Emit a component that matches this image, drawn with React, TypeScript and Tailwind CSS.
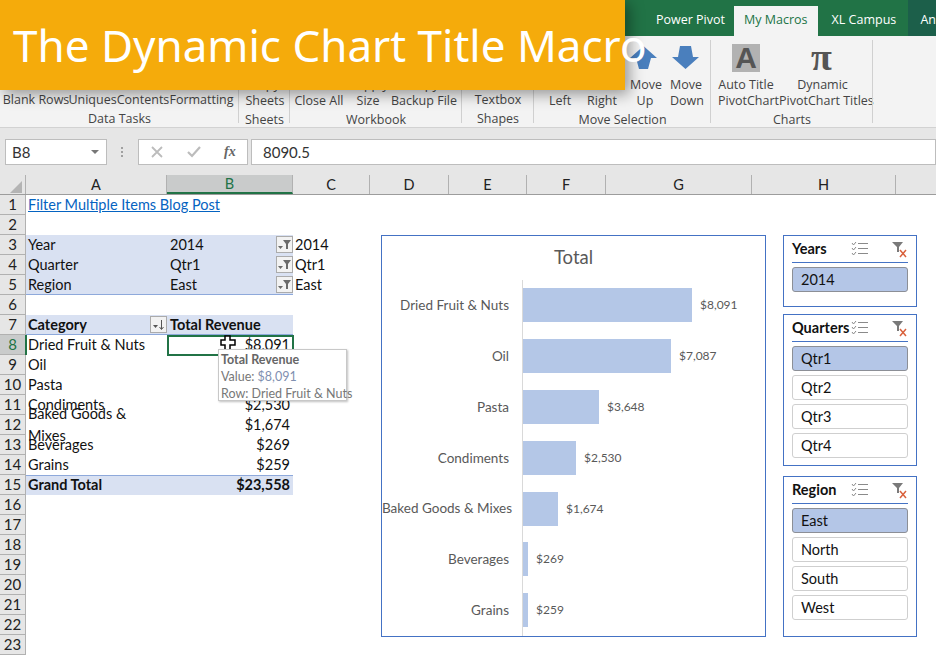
import React from "react";

const CELL_FONT = "font-['Lato','Liberation_Sans',sans-serif]";
const UI_FONT = "font-['Open_Sans','Noto_Sans',sans-serif]";

const columns = [
  { name: "A", width: "w-[141px]" },
  { name: "B", width: "w-[126px]", active: true },
  { name: "C", width: "w-[77px]" },
  { name: "D", width: "w-[79px]" },
  { name: "E", width: "w-[78px]" },
  { name: "F", width: "w-[79px]" },
  { name: "G", width: "w-[146px]" },
  { name: "H", width: "w-[144px]" },
];

const ribbonGroups = [
  {
    label: "Data Tasks",
    width: "w-[239px]",
    items: [
      { bottom: "Blank Rows", width: "w-[60px]" },
      { bottom: "Uniques", width: "w-[43px]" },
      { bottom: "Contents", width: "w-[48px]" },
      { bottom: "Formatting", width: "w-[59px]" },
    ],
    gap: "gap-[5px] pl-[6px]",
  },
  {
    label: "Sheets",
    width: "w-[51px]",
    items: [{ top: "Copy", bottom: "Sheets", width: "w-[36px]" }],
    gap: "pl-[8px]",
  },
  {
    label: "Workbook",
    width: "w-[172px]",
    items: [
      { bottom: "Close All", width: "w-[48px]" },
      { top: "Apply", bottom: "Size", width: "w-[24px]" },
      { top: "Copy", bottom: "Backup File", width: "w-[62px]" },
    ],
    gap: "gap-[13px] pl-[5px]",
  },
  {
    label: "Shapes",
    width: "w-[72px]",
    items: [{ bottom: "Textbox", width: "w-[44px]" }],
    gap: "pl-[14px]",
  },
];

type Row = {
  num: number;
  a?: string;
  b?: string;
  c?: string;
  kind?: "filter" | "head" | "total" | "body" | "link";
};

const rows: Row[] = [
  { num: 1, a: "Filter Multiple Items Blog Post", kind: "link" },
  { num: 2 },
  { num: 3, a: "Year", b: "2014", c: "2014", kind: "filter" },
  { num: 4, a: "Quarter", b: "Qtr1", c: "Qtr1", kind: "filter" },
  { num: 5, a: "Region", b: "East", c: "East", kind: "filter" },
  { num: 6 },
  { num: 7, a: "Category", b: "Total Revenue", kind: "head" },
  { num: 8, a: "Dried Fruit & Nuts", b: "$8,091", kind: "body" },
  { num: 9, a: "Oil", b: "$7,087", kind: "body" },
  { num: 10, a: "Pasta", b: "$3,648", kind: "body" },
  { num: 11, a: "Condiments", b: "$2,530", kind: "body" },
  { num: 12, a: "Baked Goods & Mixes", b: "$1,674", kind: "body" },
  { num: 13, a: "Beverages", b: "$269", kind: "body" },
  { num: 14, a: "Grains", b: "$259", kind: "body" },
  { num: 15, a: "Grand Total", b: "$23,558", kind: "total" },
  { num: 16 },
  { num: 17 },
  { num: 18 },
  { num: 19 },
  { num: 20 },
  { num: 21 },
  { num: 22 },
  { num: 23 },
];

const bars = [
  { label: "Dried Fruit & Nuts", value: "$8,091", width: 169 },
  { label: "Oil", value: "$7,087", width: 148 },
  { label: "Pasta", value: "$3,648", width: 76 },
  { label: "Condiments", value: "$2,530", width: 53 },
  { label: "Baked Goods & Mixes", value: "$1,674", width: 35 },
  { label: "Beverages", value: "$269", width: 5 },
  { label: "Grains", value: "$259", width: 5 },
];

function FunnelButton() {
  return (
    <span className="absolute right-0 top-[1px] flex h-[17px] w-[17px] items-center justify-center border border-[#ababab] bg-[#f2f2f2]">
      <svg width="15" height="13" viewBox="0 0 15 13">
        <path d="M6 2h8L11 6v5H9V6z" fill="#6a6a6a" />
        <path d="M1 8h5L3.500 11z" fill="#6a6a6a" />
      </svg>
    </span>
  );
}

function SortButton() {
  return (
    <span className="absolute right-0 top-[1px] flex h-[17px] w-[17px] items-center justify-center border border-[#ababab] bg-[#f2f2f2]">
      <svg width="13" height="12" viewBox="0 0 13 12">
        <path d="M1 6h5L3.500 9z" fill="#555" />
        <path d="M9.500 1v9M7.500 8l2 2.500 2-2.500" fill="none" stroke="#555" />
      </svg>
    </span>
  );
}

function SheetRow({ row }: { row: Row }) {
  const band =
    row.kind === "filter" || row.kind === "head" || row.kind === "total" ? "bg-[#d9e1f2]" : "";
  const strong = row.kind === "head" || row.kind === "total" ? "font-bold" : "";
  const rule =
    row.num === 5 || row.num === 7
      ? "shadow-[inset_0_-1px_0_#8ea9db]"
      : row.num === 15
        ? "shadow-[inset_0_1px_0_#8ea9db]"
        : "";
  return (
    <div className="flex h-5">
      <div
        className={`flex w-[26px] shrink-0 items-center justify-center border-r border-b border-[#b1b1b1] text-[15px] ${
          row.num === 8 ? "bg-[#c9cbcb] text-[#217346]" : "bg-[#e6e6e6] text-[#222]"
        }`}
      >
        {row.num}
      </div>
      <div className={`relative flex w-[267px] shrink-0 items-center text-[14.5px] text-[#111] ${band} ${rule} ${strong}`}>
        <div className="relative flex h-5 w-[141px] items-center pl-[2px]">
          {row.kind === "link" ? (
            <span className="whitespace-nowrap text-[#0563c1] underline">{row.a}</span>
          ) : (
            row.a
          )}
          {row.kind === "head" && <SortButton />}
        </div>
        <div
          className={`relative flex h-5 w-[126px] items-center px-[3px] ${
            row.kind === "body" || row.kind === "total" ? "justify-end" : ""
          }`}
        >
          {row.b}
          {row.kind === "filter" && <FunnelButton />}
        </div>
      </div>
      {row.c && <div className="flex items-center pl-[2px] text-[14.500px] text-[#111]">{row.c}</div>}
    </div>
  );
}

function ListIcon() {
  return (
    <svg width="18" height="16" viewBox="0 0 18 16" fill="none" stroke="#8a8a8a" strokeWidth="1">
      <path d="M1 2l1.500 2L5 1M1 7l1.500 2L5 6M1 12l1.500 2L5 11" />
      <path d="M7 2.500h10M7 7.500h10M7 12.500h10" />
    </svg>
  );
}

function ClearFilterIcon() {
  return (
    <svg width="18" height="17" viewBox="0 0 18 17">
      <path d="M1 1h11L8 6v5H6V6z" fill="#7a7a7a" />
      <path d="M9 9l6 7M15 9l-6 7" stroke="#d9603b" strokeWidth="1.500" fill="none" />
    </svg>
  );
}

function Slicer({
  title,
  items,
  height,
  className,
}: {
  title: string;
  items: string[];
  height: string;
  className?: string;
}) {
  return (
    <div className={`${height} ${className ?? ""} w-[134px] border border-[#4472c4] bg-white px-[8px]`}>
      <div className="flex h-[27px] items-center border-b border-[#4472c4]">
        <span className="flex-1 text-[14.5px] font-bold text-[#111]">{title}</span>
        <span className="mr-[22px] flex">
          <ListIcon />
        </span>
        <span className="-mr-[1px] flex">
          <ClearFilterIcon />
        </span>
      </div>
      <div className="mt-[4px] flex flex-col gap-[4px]">
        {items.map((item, i) => (
          <div
            key={item}
            className={`flex h-[25px] items-center rounded-[3px] border pl-[8px] text-[14.5px] text-[#111] ${
              i === 0 ? "border-[#8c8f96] bg-[#b4c6e7]" : "border-[#cfcfcf] bg-white"
            }`}
          >
            {item}
          </div>
        ))}
      </div>
    </div>
  );
}

export default function App() {
  return (
    <div className={`relative h-[656px] w-[936px] overflow-hidden bg-white ${CELL_FONT}`}>
      {/* Tabs */}
      <div className={`flex h-9 items-end bg-[#217346] text-[12.5px] text-white ${UI_FONT}`}>
        <div className="ml-[656px] flex h-[30px] w-[78px] items-center pb-[1px]">Power Pivot</div>
        <div className="flex h-[30px] w-[84px] items-center justify-center bg-[#f3f3f3] pb-[1px] text-[#217346]">
          My Macros
        </div>
        <div className="ml-[14px] flex h-[30px] w-[77px] items-center whitespace-nowrap pb-[1px]">XL Campus</div>
        <div className="flex h-[36px] flex-1 items-end bg-[#1c5f4a] pl-[12px]">
          <span className="flex h-[30px] items-center pb-[1px]">An</span>
        </div>
      </div>

      {/* Ribbon */}
      <div className={`flex h-[92px] border-b border-[#d2d2d2] bg-[#f3f3f3] text-[12.5px] leading-4 text-[#444] ${UI_FONT}`}>
        {ribbonGroups.map((group) => (
          <div key={group.label} className={`${group.width} relative flex flex-col pt-[41px]`}>
            <div className={`flex h-[32px] ${group.gap}`}>
              {group.items.map((item) => (
                <div key={item.bottom} className={`${item.width} flex flex-col justify-end whitespace-nowrap text-center`}>
                  {item.top && <div>{item.top}</div>}
                  <div className="flex justify-center">{item.bottom}</div>
                </div>
              ))}
            </div>
            <div className="mt-[3px] text-center text-[#444]">{group.label}</div>
            <span className="absolute right-0 top-[4px] bottom-[4px] w-px bg-[#d0d0d0]" />
          </div>
        ))}

        {/* Move Selection */}
        <div className="relative flex w-[177px] flex-col pt-[41px]">
          <div className="flex h-[32px] pl-[16px]">
            <div className="flex w-[20px] items-end justify-center">Left</div>
            <div className="ml-[18px] flex w-[28px] items-end justify-center">Right</div>
            <div className="ml-[14px] w-[30px] text-center">Move Up</div>
            <div className="ml-[10px] w-[32px] text-center">Move Down</div>
          </div>
          <div className="mt-[3px] text-center">Move Selection</div>
          <svg className="absolute left-[96px] top-[10px]" width="27" height="23" viewBox="0 0 27 23">
            <path d="M13.500 0L27 12h-6l-3 11H9L6 12H0z" fill="#4a7fbd" />
          </svg>
          <svg className="absolute left-[138px] top-[10px]" width="27" height="23" viewBox="0 0 27 23">
            <path d="M13.500 23L27 11h-6L19 0H8L6 11H0z" fill="#4a7fbd" />
          </svg>
          <span className="absolute right-0 top-[4px] bottom-[4px] w-px bg-[#d0d0d0]" />
        </div>

        {/* Charts */}
        <div className="relative flex w-[162px] flex-col pt-[41px]">
          <div className="flex h-[32px] pl-[7px]">
            <div className="w-[56px] text-center">Auto Title PivotChart</div>
            <div className="ml-[5px] w-[87px] whitespace-nowrap text-center">
              <div>Dynamic</div>
              <div>PivotChart Titles</div>
            </div>
          </div>
          <div className="mt-[3px] text-center">Charts</div>
          <div className="absolute left-[21px] top-[8px] flex h-[28px] w-[28px] items-center justify-center bg-[#b2b2b2] font-['Liberation_Sans',sans-serif] text-[30px] font-bold leading-none text-[#555]">
            A
          </div>
          <div className="absolute left-[100px] top-[2px] font-['Liberation_Serif',serif] text-[38px] font-bold leading-[38px] text-[#555]">
            π
          </div>
          <span className="absolute right-0 top-[4px] bottom-[4px] w-px bg-[#d0d0d0]" />
        </div>
      </div>

      {/* Formula bar */}
      <div className="flex h-[47px] bg-[#e6e6e6] pt-[11px]">
        <div className="ml-[5px] flex h-[26px] w-[102px] items-center justify-between border border-[#bdbdbd] bg-white pl-[6px] pr-[7px] text-[15px] text-[#333]">
          B8
          <span className="h-0 w-0 border-x-[4px] border-t-[4px] border-x-transparent border-t-[#777]" />
        </div>
        <div className="ml-[14px] flex h-[26px] w-[4px] flex-col justify-center gap-[2px]">
          <span className="h-[2px] w-[2px] bg-[#a0a0a0]" />
          <span className="h-[2px] w-[2px] bg-[#a0a0a0]" />
          <span className="h-[2px] w-[2px] bg-[#a0a0a0]" />
        </div>
        <div className="ml-[13px] flex h-[26px] w-[110px] items-center border border-[#bdbdbd] bg-white pl-[12px]">
          <svg width="12" height="12" viewBox="0 0 12 12" fill="none" stroke="#bcbcbc" strokeWidth="1.800">
            <path d="M1 1l10 10M11 1L1 11" />
          </svg>
          <svg className="ml-[24px]" width="14" height="12" viewBox="0 0 14 12" fill="none" stroke="#bcbcbc" strokeWidth="2.200">
            <path d="M1 6l4 4 8-9" />
          </svg>
          <span className="ml-[23px] font-['Liberation_Serif',serif] text-[14px] font-bold italic leading-none text-[#666]">fx</span>
        </div>
        <div className="ml-[3px] flex h-[26px] flex-1 items-center border border-[#bdbdbd] bg-white pl-[11px] text-[15px] text-[#333]">
          8090.5
        </div>
      </div>

      {/* Column headers */}
      <div className="flex h-[20px] items-stretch border-b border-[#9c9c9c] bg-[#e6e6e6] pt-[0px]">
        <div className="relative w-[26px] shrink-0 border-r border-[#b1b1b1]">
          <span className="absolute bottom-[1px] right-[3px] h-0 w-0 border-b-[12px] border-l-[12px] border-b-[#b4b4b4] border-l-transparent" />
        </div>
        {columns.map((col) => (
          <div
            key={col.name}
            className={`${col.width} flex shrink-0 items-center justify-center border-r border-[#b1b1b1] text-[14.5px] ${
              col.active ? "border-b-2 border-b-[#217346] bg-[#c9cbcb] text-[#217346]" : "text-[#222]"
            }`}
          >
            {col.name}
          </div>
        ))}
      </div>

      {/* Sheet */}
      <div className="relative flex">
        <div className="w-[370px] shrink-0">
          {rows.map((row) => (
            <SheetRow key={row.num} row={row} />
          ))}
        </div>

        {/* Chart */}
        <div className="ml-[11px] mt-[40px] flex h-[402px] w-[385px] shrink-0 flex-col border border-[#4472c4] bg-white text-[#595959]">
          <div className="mt-[9px] h-[35px] text-center text-[18.500px] leading-6">Total</div>
          <div className="flex flex-col">
            {bars.map((bar) => (
              <div key={bar.label} className="flex h-[50.800px] items-center">
                <div className="w-[128px] whitespace-nowrap pr-[1px] text-right text-[13.5px]">{bar.label}</div>
                <div className="ml-[12px] flex h-full items-center border-l border-[#d9d9d9]">
                  <div className="h-[34px] bg-[#b4c7e7]" style={{ width: bar.width }} />
                  <span className="ml-[8px] text-[12px]">{bar.value}</span>
                </div>
              </div>
            ))}
          </div>
        </div>

        {/* Slicers */}
        <div className="ml-[17px] mt-[40px] flex flex-col">
          <Slicer title="Years" items={["2014"]} height="h-[72px]" />
          <Slicer title="Quarters" items={["Qtr1", "Qtr2", "Qtr3", "Qtr4"]} height="h-[152px]" className="mt-[7px]" />
          <Slicer title="Region" items={["East", "North", "South", "West"]} height="h-[161px]" className="mt-[10px]" />
        </div>

        {/* Active cell */}
        <div className="absolute left-[167px] top-[140px] h-[21px] w-[127px] border-2 border-[#217346]" />
        <div className="absolute left-[25px] top-[140px] h-5 w-[2px] bg-[#217346]" />

        {/* Cursor */}
        <svg className="absolute left-[220px] top-[140px]" width="16" height="16" viewBox="0 0 16 16">
          <path d="M5 1h5v4h5v5h-5v5H5v-5H1V5h4z" fill="#fff" stroke="#000" strokeWidth="1.500" />
        </svg>

        {/* Tooltip */}
        <div className="absolute left-[218px] top-[154px] h-[52px] w-[129px] border border-[#c8c8c8] bg-white pl-[2px] pt-[1px] text-[12.5px] leading-[17px] text-[#777] shadow-[1px_1px_2px_rgba(0,0,0,0.25)]">
          <div className="font-bold text-[#666]">Total Revenue</div>
          <div>
            Value: <span className="text-[#7f8fb0]">$8,091</span>
          </div>
          <div className="whitespace-nowrap">Row: Dried Fruit &amp; Nuts</div>
        </div>
      </div>

      {/* Title banner */}
      <div className="absolute left-0 top-0 flex h-[90px] w-[625px] items-center bg-[#f5ab0b] pl-[13px] pb-[1px] shadow-[4px_4px_14px_rgba(0,0,0,0.4)]">
        <span className="whitespace-nowrap font-['Noto_Sans',sans-serif] text-[44px] leading-none text-white">
          The Dynamic Chart Title Macro
        </span>
      </div>
    </div>
  );
}
